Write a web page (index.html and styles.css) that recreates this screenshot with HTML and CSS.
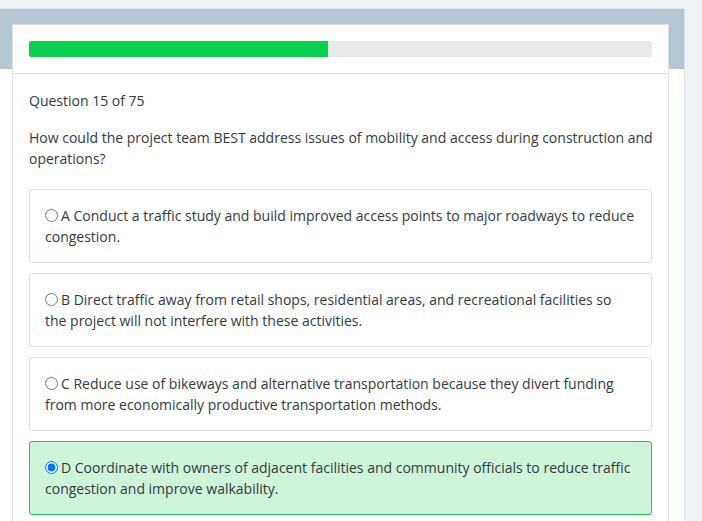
FILE: index.html
```html
<!DOCTYPE html>
<html lang="en">
<head>
  <meta charset="UTF-8" />
  <meta name="viewport" content="width=device-width, initial-scale=1.0"/>
  <title>Practice Exam</title>
  <link rel="stylesheet" href="styles.css">
</head>
<body>

<div class="page">
  <div class="quiz-card">
    <div class="quiz-header">
      <div class="progress">
        <div class="progress-fill" style="width: 48%"></div>
      </div>
    </div>

    <div class="quiz-body">
      <p class="question-count">Question 15 of 75</p>
      <p class="question-text">How could the project team BEST address issues of mobility and access during construction and operations?</p>

      <!-- answer choices -->
      <label class="option">
        <input type="radio" name="answer" value="A">A Conduct a traffic study and build improved access points to major roadways to reduce congestion.
      </label>
      <label class="option">
        <input type="radio" name="answer" value="B">B Direct traffic away from retail shops, residential areas, and recreational facilities so the project will not interfere with these activities.
      </label>
      <label class="option">
        <input type="radio" name="answer" value="C">C Reduce use of bikeways and alternative transportation because they divert funding from more economically productive transportation methods.
      </label>
      <label class="option selected">
        <input type="radio" name="answer" value="D" checked>D Coordinate with owners of adjacent facilities and community officials to reduce traffic congestion and improve walkability.
      </label>
    </div>
  </div>
</div>

</body>
</html>
```

FILE: styles.css
```css
body {
  font-family: 'Open Sans', 'Liberation Sans', sans-serif;
  background-color: #eef2f6;
  margin: 0;
  color: #343a40;
  font-size: 14px;
  line-height: 21px;
}

.page {
  width: 685px;
  margin-top: 8px;
  min-height: 520px;
  border-top: 1px solid #dde3e8;
  border-right: 1px solid #dde3e8;
  box-sizing: border-box;
  background: linear-gradient(#b5c7d3 0, #b5c7d3 60px, #ffffff 60px);
  padding: 15px 15px 0 12px;
}

.quiz-card {
  background-color: white;
  border: 1px solid #dee2e6;
  border-bottom: none;
}

.quiz-header {
  padding: 16px;
  border-bottom: 1px solid #dee2e6;
}

.progress {
  height: 16px;
  background-color: #e6eaed;
  border-radius: 3px;
  overflow: hidden;
}

.progress-fill {
  height: 100%;
  background-color: #0acf4f;
}

.quiz-body {
  padding: 16px 16px 8px;
}

.question-count {
  margin: 0 0 16px;
}

.question-text {
  margin: 0 -6px 20px 0;
}

.option {
  display: block;
  border: 1px solid #dee2e6;
  border-radius: 3px;
  padding: 15px;
  margin-bottom: 10px;
  cursor: pointer;
}

.option input {
  margin: 0 3px 0 0;
  width: 13px;
  height: 13px;
  vertical-align: -1px;
}

.option.selected {
  background-color: #cef4da;
  border-color: #1fc957;
}
```
